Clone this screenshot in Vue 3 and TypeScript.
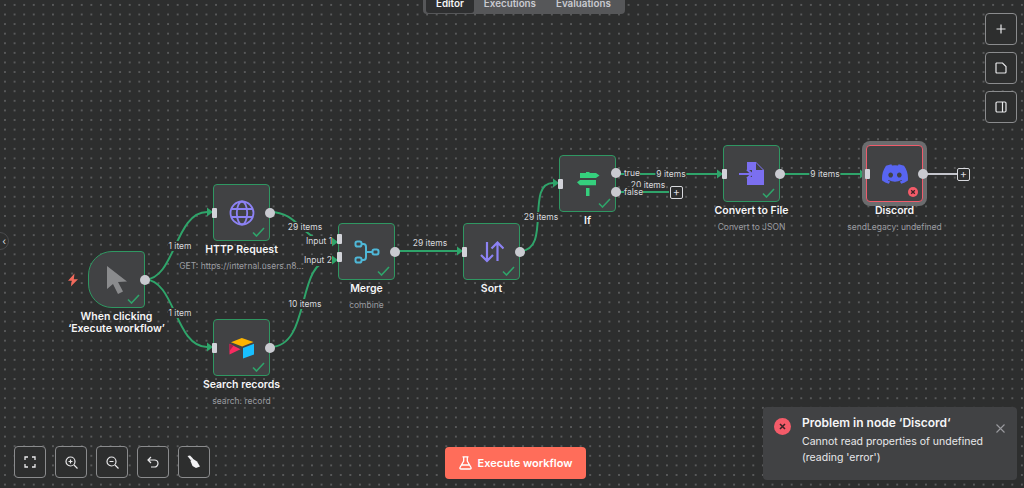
<script setup lang="ts">
interface FlowNode { id: string; x: number; y: number; name: string; sub?: string; cls?: string; ok?: boolean; nameW?: number }
const nodes: FlowNode[] = [
  { id: 'trigger', x: 88, y: 251, name: "When clicking ‘Execute workflow’", cls: 'trigger', ok: true, nameW: 118 },
  { id: 'http', x: 213, y: 184, name: 'HTTP Request', sub: 'GET: https://internal.users.n8...', ok: true },
  { id: 'search', x: 213, y: 319, name: 'Search records', sub: 'search: record', ok: true },
  { id: 'merge', x: 338, y: 223, name: 'Merge', sub: 'combine', ok: true },
  { id: 'sort', x: 463, y: 223, name: 'Sort', ok: true },
  { id: 'if', x: 559, y: 155, name: 'If', ok: true },
  { id: 'convert', x: 723, y: 145, name: 'Convert to File', sub: 'Convert to JSON', ok: true },
  { id: 'discord', x: 866, y: 145, name: 'Discord', sub: 'sendLegacy: undefined', cls: 'failed' },
]
const edges: string[] = [
  'M145 279.5 C175 279.5 175 212 207 212',
  'M145 279.5 C175 279.5 175 347 207 347',
  'M270 212 C300 212 302 242 332 242',
  'M270 347 C312 347 295 260 332 260',
  'M395 251 L457 251',
  'M520 251 C552 251 525 183 553 183',
  'M616 174 L717 174',
  'M779 174 L860 174',
]
const labels = [
  { x: 180, y: 246, t: '1 item' },
  { x: 180, y: 313, t: '1 item' },
  { x: 305, y: 227, t: '29 items' },
  { x: 305, y: 304, t: '10 items' },
  { x: 430, y: 243, t: '29 items' },
  { x: 541, y: 217, t: '29 items' },
  { x: 671, y: 174, t: '9 items' },
  { x: 825, y: 174, t: '9 items' },
  { x: 648, y: 185, t: '20 items', plain: true },
]
</script>

<template>
  <div class="canvas">
    <svg class="wires" width="1024" height="488" viewBox="0 0 1024 488" fill="none">
      <path v-for="(d, i) in edges" :key="i" :d="d" stroke="#2fa46a" stroke-width="2" />
      <path d="M616 192 L669 192" stroke="#2fa46a" stroke-width="2" />
      <path d="M924 174 L957 174" stroke="#c4c5cc" stroke-width="2" />
      <g fill="#2fa46a">
        <path d="M207 207.5 L213 212 L207 216.5Z" />
        <path d="M207 342.500 L213 347 L207 351.500Z" />
        <path d="M332 237.500 L338 242 L332 246.500Z" />
        <path d="M332 255.500 L338 260 L332 264.500Z" />
        <path d="M457 246.500 L463 251 L457 255.500Z" />
        <path d="M553 178.500 L559 183 L553 187.500Z" />
        <path d="M717 169.500 L723 174 L717 178.500Z" />
        <path d="M860 169.500 L866 174 L860 178.500Z" />
      </g>
    </svg>

    <span
      v-for="l in labels"
      :key="l.t + l.x"
      class="edge-label"
      :class="{ plain: l.plain }"
      :style="{ left: l.x + 'px', top: l.y + 'px' }"
    >{{ l.t }}</span>

    <svg class="bolt" width="12" height="14" viewBox="0 0 12 14">
      <path d="M7.500 0.500 L1 7.800 L4.800 7.800 L3.800 13.500 L11 6.200 L6.800 6.200Z" fill="#f2695b" />
    </svg>

    <div
      v-for="n in nodes"
      :key="n.id"
      class="node"
      :class="n.cls"
      :style="{ left: n.x + 'px', top: n.y + 'px' }"
    >
      <div class="box">
        <svg v-if="n.id === 'trigger'" width="24" height="30" viewBox="0 0 24 30">
          <path d="M2 1 L2 24 L8 19 L13 29 L18 26.500 L13 17 L22 16.500Z" fill="#8a8b8d" />
        </svg>
        <svg v-else-if="n.id === 'http'" width="26" height="26" viewBox="0 0 26 26" fill="none" stroke="#8c82f3" stroke-width="1.800">
          <circle cx="13" cy="13" r="11.500" />
          <ellipse cx="13" cy="13" rx="5.200" ry="11.500" />
          <path d="M2.300 9 H23.700 M2.300 17 H23.700" />
        </svg>
        <svg v-else-if="n.id === 'search'" width="26" height="22" viewBox="0 0 26 22">
          <path d="M2 5.200 L12.800 1 L24.500 5 L13.200 9.400Z" fill="#fcb400" />
          <path d="M14 11 L25 6.800 V17.500 L14 21.500Z" fill="#18bfff" />
          <path d="M0.500 6.800 L11.500 12.200 L0.500 17.500Z" fill="#f82b60" />
          <path d="M0.500 6.800 L4.500 8.800 L0.500 14Z" fill="#a8204d" />
        </svg>
        <svg v-else-if="n.id === 'merge'" width="26" height="24" viewBox="0 0 26 24" fill="none" stroke="#4fb8d8" stroke-width="2">
          <rect x="1.500" y="1.500" width="6" height="5" rx="1.800" />
          <rect x="1.500" y="17.500" width="6" height="5" rx="1.800" />
          <rect x="18.500" y="9.500" width="6" height="5" rx="1.800" />
          <path d="M7.500 4 H9.500 C11.500 4 12 5.500 12 7 V17 C12 18.500 11.500 20 9.500 20 H7.500 M12 12 H18.500" />
        </svg>
        <svg v-else-if="n.id === 'sort'" width="24" height="22" viewBox="0 0 24 22" fill="none" stroke="#8c82f3" stroke-width="2.200">
          <path d="M7 1 V20 M1 14 L7 20 L13 14 M17.500 20 V1.500 M11.500 7.500 L17.500 1.500 L23.500 7.500" />
        </svg>
        <svg v-else-if="n.id === 'if'" width="24" height="24" viewBox="0 0 24 24" fill="#35cf7d">
          <path d="M4 1 H20 L23.500 3.500 L20 6 H4Z" />
          <path d="M1 9 L4 6.800 H20 V12 H4Z" transform="translate(0 1.200)" />
          <rect x="10" y="0" width="3.500" height="2" />
          <rect x="10" y="16" width="3.500" height="8" />
        </svg>
        <svg v-else-if="n.id === 'convert'" width="26" height="24" viewBox="0 0 26 24">
          <path d="M8 0 H17 L25 8 V23 H8 V15 H13 V8 H8Z M17 1 V8 H24Z" fill="#7b6ff0" fill-rule="evenodd" />
          <path d="M0 11 H12 M8 6.500 L13 11 L8 15.500" transform="translate(0 1)" fill="none" stroke="#7b6ff0" stroke-width="2.200" />
        </svg>
        <svg v-else-if="n.id === 'discord'" width="26" height="20" viewBox="0 0 127.140 96.360">
          <path fill="#5865f2" d="M107.700 8.070A105.150 105.150 0 0 0 81.470 0a72.060 72.060 0 0 0-3.360 6.830 97.680 97.680 0 0 0-29.110 0A72.370 72.370 0 0 0 45.640 0a105.890 105.890 0 0 0-26.250 8.090C2.790 32.650-1.710 56.600.54 80.210a105.730 105.730 0 0 0 32.170 16.150 77.700 77.700 0 0 0 6.890-11.110 68.420 68.420 0 0 1-10.850-5.180c.91-.66 1.800-1.340 2.660-2a75.570 75.570 0 0 0 64.320 0c.87.710 1.760 1.390 2.660 2a68.680 68.680 0 0 1-10.870 5.190 77 77 0 0 0 6.890 11.100 105.250 105.250 0 0 0 32.190-16.140c2.640-27.380-4.510-51.110-18.900-72.150ZM42.450 65.690C36.180 65.690 31 60 31 53s5-12.740 11.430-12.740S54 46 53.890 53s-5.050 12.690-11.440 12.690Zm42.240 0C78.410 65.690 73.250 60 73.250 53s5-12.740 11.440-12.740S96.230 46 96.120 53s-5.040 12.690-11.430 12.690Z" />
        </svg>

        <svg v-if="n.ok" class="check" width="13" height="10" viewBox="0 0 13 10" fill="none">
          <path d="M1 5.500 L4.500 9 L12 1" stroke="#2fa46a" stroke-width="1.600" />
        </svg>
        <svg v-if="n.cls === 'failed'" class="err" width="10" height="10" viewBox="0 0 10 10">
          <circle cx="5" cy="5" r="5" fill="#f45b69" />
          <path d="M3.200 3.200 L6.800 6.800 M6.800 3.200 L3.200 6.800" stroke="#3a2326" stroke-width="1.300" />
        </svg>

        <i v-if="n.id === 'merge'" class="input" style="top: 10px" />
        <i v-if="n.id === 'merge'" class="input" style="top: 28px" />
        <i v-else-if="n.id !== 'trigger'" class="input" />
        <b v-if="n.id === 'if'" class="output" style="top: 12px" />
        <b v-if="n.id === 'if'" class="output" style="top: 31px" />
        <b v-else-if="n.id !== 'merge-x'" class="output" />
      </div>
      <div class="name" :style="n.nameW ? { width: n.nameW + 'px' } : undefined">{{ n.name }}</div>
      <div v-if="n.sub" class="sub">{{ n.sub }}</div>
    </div>

    <span class="port-label" style="left: 306px; top: 236px">Input 1</span>
    <span class="port-label" style="left: 304px; top: 255px">Input 2</span>
    <span class="port-label" style="left: 624px; top: 168px">true</span>
    <span class="port-label" style="left: 624px; top: 187px">false</span>

    <span class="mini-plus" style="left: 670px; top: 186px">+</span>
    <span class="mini-plus" style="left: 957px; top: 168px">+</span>

    <div class="collapse"><span>‹</span></div>

    <div class="tabs">
      <span class="tab active">Editor</span>
      <span class="tab">Executions</span>
      <span class="tab">Evaluations</span>
    </div>

    <div class="side-tools">
      <button class="tool">
        <svg width="10" height="10" viewBox="0 0 10 10" fill="none" stroke="#e8e8ea" stroke-width="1.200"><path d="M5 0.500 V9.500 M0.500 5 H9.500" /></svg>
      </button>
      <button class="tool">
        <svg width="12" height="12" viewBox="0 0 12 12" fill="none" stroke="#e8e8ea" stroke-width="1.200"><path d="M1.500 1 H7.500 L11 4.500 V10 Q11 11 10 11 H2 Q1 11 1 10 V1.500Z" /></svg>
      </button>
      <button class="tool">
        <svg width="12" height="12" viewBox="0 0 12 12" fill="none" stroke="#e8e8ea" stroke-width="1.200"><rect x="1" y="1" width="10" height="10" rx="1.200" /><path d="M7.500 1 V11" /></svg>
      </button>
    </div>

    <div class="bottom-tools">
      <button class="tool">
        <svg width="12" height="12" viewBox="0 0 12 12" fill="none" stroke="#e8e8ea" stroke-width="1.300"><path d="M1 4 V1 H4 M8 1 H11 V4 M11 8 V11 H8 M4 11 H1 V8" /></svg>
      </button>
      <button class="tool">
        <svg width="13" height="13" viewBox="0 0 13 13" fill="none" stroke="#e8e8ea" stroke-width="1.200"><circle cx="5.500" cy="5.500" r="4.500" /><path d="M9 9 L12.500 12.500 M3.500 5.500 H7.500 M5.500 3.500 V7.500" /></svg>
      </button>
      <button class="tool">
        <svg width="13" height="13" viewBox="0 0 13 13" fill="none" stroke="#e8e8ea" stroke-width="1.200"><circle cx="5.500" cy="5.500" r="4.500" /><path d="M9 9 L12.500 12.500 M3.500 5.500 H7.500" /></svg>
      </button>
      <button class="tool">
        <svg width="12" height="12" viewBox="0 0 12 12" fill="none" stroke="#e8e8ea" stroke-width="1.200"><path d="M4 1 L1 4 L4 7 M1 4 H7.500 A3.500 3.500 0 0 1 7.500 11 H4" /></svg>
      </button>
      <button class="tool">
        <svg width="14" height="14" viewBox="0 0 14 14"><path d="M0.500 1 L3 0.500 L6 3.500 L4 5.500Z" fill="#f2f2f4" /><path d="M5.500 3.500 L10 6.500 L13 11.500 L9 13 L5.500 11 L3.500 6Z" fill="#f2f2f4" /></svg>
      </button>
    </div>

    <button class="run">
      <svg width="13" height="14" viewBox="0 0 13 14" fill="none" stroke="#fff" stroke-width="1.300"><path d="M3.500 0.800 H9.500 M4.700 0.800 V5 L1 11.500 Q0.500 13 2 13 H11 Q12.500 13 12 11.500 L8.300 5 V0.800 M3 9 H10" /></svg>
      Execute workflow
    </button>

    <div class="toast">
      <svg class="toast-icon" width="17" height="17" viewBox="0 0 17 17">
        <circle cx="8.500" cy="8.500" r="8.500" fill="#f45b69" />
        <path d="M6 6 L11 11 M11 6 L6 11" stroke="#3a2326" stroke-width="1.600" />
      </svg>
      <div class="toast-body">
        <div class="toast-title">Problem in node ‘Discord‘</div>
        <div class="toast-msg">Cannot read properties of undefined (reading 'error')</div>
      </div>
      <svg class="toast-close" width="9" height="9" viewBox="0 0 9 9" fill="none" stroke="#9a9b9f" stroke-width="1.100"><path d="M0.500 0.500 L8.500 8.500 M8.500 0.500 L0.500 8.500" /></svg>
    </div>
  </div>
</template>

<style>
html, body { margin: 0; background: #2d2e2e; overflow: hidden; }
</style>

<style scoped>
.canvas {
  position: relative;
  width: 1024px;
  height: 488px;
  overflow: hidden;
  background-color: #2d2e2e;
  background-image: radial-gradient(circle at center, #58595a 0.8px, transparent 1.1px);
  background-size: 9.6px 9.6px;
  background-position: 0.200px 0.100px;
  font-family: Inter, "Liberation Sans", sans-serif;
  color: #f2f2f4;
}
.wires { position: absolute; inset: 0; }
.bolt { position: absolute; left: 67px; top: 273px; }

.node { position: absolute; width: 57px; display: flex; flex-direction: column; align-items: center; }
.box {
  position: relative;
  box-sizing: border-box;
  width: 57px;
  height: 57px;
  flex: none;
  display: flex;
  align-items: center;
  justify-content: center;
  background: #414244;
  border: 1.500px solid #2f9762;
  border-radius: 4px;
}
.trigger .box { border-radius: 24px 4px 4px 24px; }
.failed .box { border-color: #ef5b6b; box-shadow: 0 0 0 4px #6b6c6e; }
.check { position: absolute; right: 4px; bottom: 3px; }
.err { position: absolute; right: 4px; bottom: 4px; }
.input {
  position: absolute;
  left: -2px;
  top: 23px;
  width: 5px;
  height: 10px;
  background: #d2d3d9;
  border-radius: 1px;
}
.output {
  position: absolute;
  right: -6px;
  top: 23px;
  width: 10px;
  height: 10px;
  background: #c9cad0;
  border-radius: 50%;
}
.name {
  margin-top: 3px;
  width: 170px;
  flex: none;
  text-align: center;
  font-size: 10.500px;
  line-height: 12px;
  font-weight: 600;
  color: #f5f5f7;
  text-shadow: 0 0 2px #2d2e2e;
}
.sub {
  margin-top: 5px;
  width: 170px;
  flex: none;
  text-align: center;
  font-size: 8.500px;
  line-height: 11px;
  color: #9b9ca1;
  white-space: nowrap;
}
.edge-label {
  position: absolute;
  transform: translate(-50%, -50%);
  font-size: 8.500px;
  line-height: 10px;
  padding: 0 1px;
  color: #d8d9dd;
  background: #2d2e2e;
  white-space: nowrap;
}
.edge-label.plain { background: transparent; }
.port-label {
  position: absolute;
  font-size: 8.500px;
  line-height: 11px;
  color: #d8d9dd;
  background: #2d2e2e;
  white-space: nowrap;
}
.mini-plus {
  position: absolute;
  box-sizing: border-box;
  width: 13px;
  height: 13px;
  display: flex;
  align-items: center;
  justify-content: center;
  font-size: 11px;
  line-height: 1;
  color: #d8d9dd;
  background: #2d2e2e;
  border: 1px solid #d8d9dd;
  border-radius: 2px;
}
.collapse {
  position: absolute;
  left: -9px;
  top: 232px;
  box-sizing: border-box;
  width: 18px;
  height: 18px;
  border: 1px solid #4a4b4d;
  border-radius: 50%;
  background: #2d2e2e;
  display: flex;
  align-items: center;
  justify-content: flex-end;
  padding-right: 2px;
  font-size: 10px;
  line-height: 1;
  color: #d8d9dd;
}
.tabs {
  position: absolute;
  left: 423px;
  top: -6px;
  display: flex;
  align-items: center;
  gap: 0;
  height: 20px;
  padding: 0 4px 0 3px;
  background: #565759;
  border-radius: 0 0 4px 4px;
}
.tab {
  font-size: 9.800px;
  line-height: 14px;
  font-weight: 600;
  color: #c9cad0;
  padding: 0 10px;
}
.tab.active {
  background: #2e2f30;
  color: #f5f5f7;
  border-radius: 3px;
  padding: 2px 10px;
  margin-right: 0;
}
.side-tools { position: absolute; top: 13px; right: 7px; display: flex; flex-direction: column; gap: 7px; }
.bottom-tools { position: absolute; left: 14px; top: 446px; display: flex; gap: 9px; }
.tool {
  box-sizing: border-box;
  width: 32px;
  height: 32px;
  padding: 0;
  display: flex;
  align-items: center;
  justify-content: center;
  background: #2d2e2e;
  border: 1px solid #8a8b8d;
  border-radius: 4px;
}
.run {
  position: absolute;
  left: 445px;
  top: 447px;
  box-sizing: border-box;
  width: 141px;
  height: 32px;
  padding: 0;
  display: flex;
  align-items: center;
  justify-content: center;
  gap: 6px;
  background: #ff6d5a;
  border: none;
  border-radius: 4px;
  color: #fff;
  font-family: inherit;
  font-size: 11px;
  font-weight: 600;
}
.toast {
  position: absolute;
  left: 763px;
  top: 407px;
  box-sizing: border-box;
  width: 254px;
  height: 73px;
  padding: 6px 12px 0 11px;
  display: flex;
  align-items: flex-start;
  gap: 11px;
  background: #414244;
  border-radius: 4px;
}
.toast-icon { margin-top: 5px; flex: none; }
.toast-body { flex: 1; min-width: 0; }
.toast-title { font-size: 12px; line-height: 17px; font-weight: 600; color: #f5f5f7; margin-top: 1px; }
.toast-msg { margin-top: 3px; font-size: 10.500px; line-height: 16px; color: #e8e8ea; }
.toast-close { margin-top: 11px; flex: none; }
</style>
